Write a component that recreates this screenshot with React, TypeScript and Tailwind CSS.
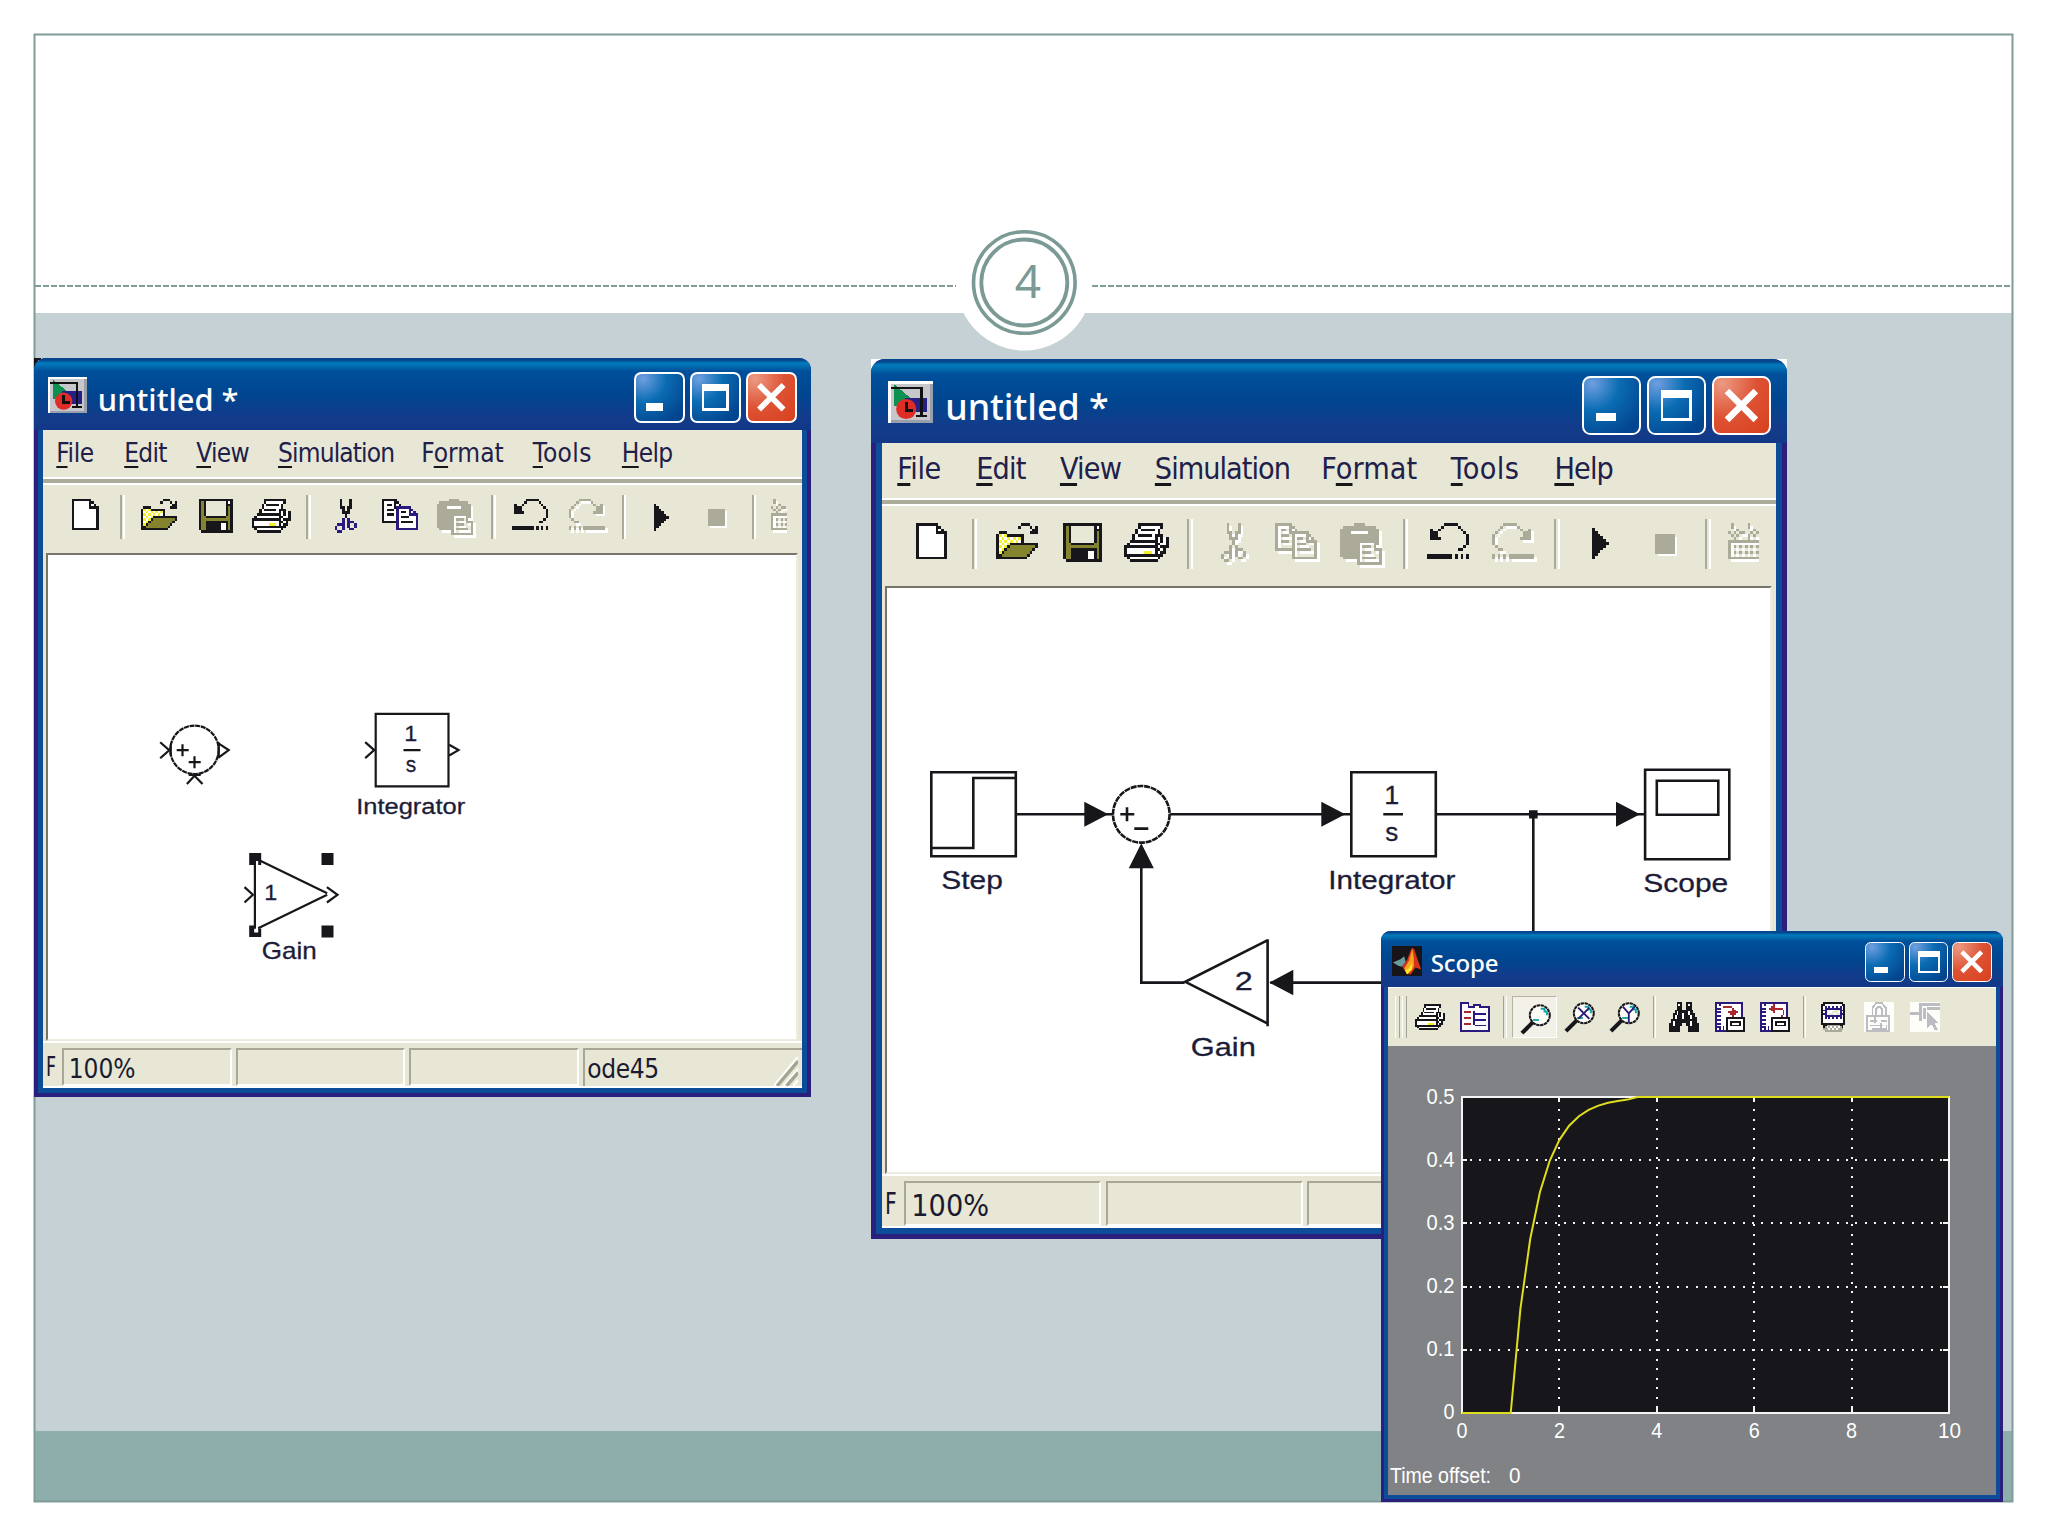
import React from 'react';
import clsx from 'clsx';

const PALETTE: Record<string, string> = {
  k: '#17161b',
  w: '#ffffff',
  y: '#f3ee2b',
  o: '#84842f',
  c: '#e8e8d6',
  b: '#2a1a7e',
  g: '#acab9a',
  r: '#a8282d',
  t: '#12a5a5',
};

const PIXELS: Record<string, string[]> = {
  new: [
    'kkkkkkkk...',
    'kwwwwwwkk..',
    'kwwwwwwkwk.',
    'kwwwwwwkkkk',
    'kwwwwwwwwwk',
    'kwwwwwwwwwk',
    'kwwwwwwwwwk',
    'kwwwwwwwwwk',
    'kwwwwwwwwwk',
    'kwwwwwwwwwk',
    'kwwwwwwwwwk',
    'kwwwwwwwwwk',
    'kkkkkkkkkkk',
  ],
  open: [
    '.........kkk....',
    '........k...k.k.',
    '.............kk.',
    '.kkk........kkk.',
    'kywykkkkkk......',
    'kwywywywyk......',
    'kywywywywk......',
    'kwywykkkkkkkkkk.',
    'kywykoooooooook.',
    'kwykoooooooook..',
    'kykoooooooook...',
    'kkoooooooook....',
    'kkkkkkkkkkk.....',
  ],
  save: [
    'kkkkkkkkkkkkkk',
    'kokcccccccckwk',
    'kokcccccccckkk',
    'kokcccccccckok',
    'kokcccccccckok',
    'kokcccccccckok',
    'kokcccccccckok',
    'kookkkkkkkkook',
    'kooooooooooook',
    'kookkkkkkkkkok',
    'kookkkkkkwwkok',
    'kookkkkkkwwkok',
    'kookkkkkkwwkok',
    '.kkkkkkkkkkkkk',
  ],
  print: [
    '.....kkkkkkkkk..',
    '.....kwwwwwwwk..',
    '....kwkkkkkwk...',
    '....kwwwwwwwk...',
    '...kwkkkkkwkkk..',
    '...kwwwwwwwkwkwk',
    '..kkkkkkkkkkwkwk',
    '.kwwwwwwwwwkkwwk',
    'kkkkkkkkkkkkwkkk',
    'kwwwwwwwwwwkkwk.',
    'kwwwwwwyyywkwkk.',
    'kkkkkkkkkkkkkk..',
    '.kwwwwwwwwwwk...',
    '..kkkkkkkkkk....',
  ],
  cut: [
    '..k...k..',
    '..k...k..',
    '..k...k..',
    '..kk.kk..',
    '...k.k...',
    '...kkk...',
    '....k....',
    '....k....',
    '...b.b...',
    '...b.bbb.',
    '.bbb.b..b',
    'b..b.b..b',
    'b..b..bb.',
    '.bb......',
  ],
  copy: [
    'kkkkkk..........',
    'kwwwwkk.........',
    'kwkkwkwk........',
    'kwwwwkbbbbbb....',
    'kwkkkwbwwwwbb...',
    'kwwwwwbwkkwbwb..',
    'kwkkkwbwwwwbbbb.',
    'kwwwwwbwkkkwwwb.',
    'kwwwwwbwwwwwwwb.',
    'kkkkkkbwkkkkkwb.',
    '......bwwwwwwwb.',
    '......bwwwwwwwb.',
    '......bbbbbbbbb.',
  ],
  paste: [
    '.....kkkk.......',
    '.kkkkkkkkkkkk...',
    'kkkkkkkkkkkkkk..',
    'kkkk......kkkk..',
    'kkkkkkkkkkkkkk..',
    'kkkkkkkkkkkkkk..',
    'kkkkkkkkkkkkkk..',
    'kkkkkkk.....kk..',
    'kkkkkkk.kkk.k...',
    'kkkkkkk.....kkk.',
    'kkkkkkk.kkk...k.',
    'kkkkkkk.......k.',
    '.kkkkkk.kkkkk.k.',
    '......k.......k.',
    '......kkkkkkkkk.',
  ],
  undo: [
    '......kkkkk.....',
    '.....k.....k....',
    '.k..k.......k...',
    '.kkk.........k..',
    '.kkk..........k.',
    '.kkkk.........k.',
    '..............k.',
    '..............k.',
    '.............k..',
    '...........kk...',
    '................',
    'kkkkkkkkk.k.k.k.',
    'kkkkkkkkk.k.k.k.',
  ],
  redo: [
    '....kkkkk......',
    '...k.....k.....',
    '..k.......k..k.',
    '.k.........kkk.',
    'k..........kkk.',
    'k.........kkkk.',
    'k..............',
    'k..............',
    '.k.............',
    '..kk...........',
    '...............',
    'k.k.k.kkkkkkkkk',
    'k.k.k.kkkkkkkkk',
  ],
  play: [
    'k.....',
    'kk....',
    'kkk...',
    'kkkk..',
    'kkkkk.',
    'kkkkkk',
    'kkkkk.',
    'kkkk..',
    'kkk...',
    'kk....',
    'k.....',
  ],
  stop: ['kkkkkkk', 'kkkkkkk', 'kkkkkkk', 'kkkkkkk', 'kkkkkkk', 'kkkkkkk', 'kkkkkkk'],
  build: [
    '.k.....k........',
    '.k.....k...k....',
    '...k.....k......',
    'k.k.kk..k.kk....',
    '.k.k...k.k......',
    '..k....k........',
    'kkkkkkkkkkkkkkkk',
    'k...............',
    'k.k.k.k.k.k.k..k',
    'k...............',
    'k.k.k.k.k.k.k..k',
    'k...............',
    'kkkkkkkkkkkkkkkk',
  ],
  params: [
    'bbbbb...........',
    'bwwwb..bbbb.....',
    'bwwwbbbbwwbbbbbb',
    'bwwwwwwwwwwwwwwb',
    'bwwwwwwwwwwwwwwb',
    'bwrrrrwbwwwwwwwb',
    'bwwwwwwbbbbbbbwb',
    'bwwwwwwbwwwwwwwb',
    'bwrrrrwbwwwwwwwb',
    'bwwwwwwbbbbbbbwb',
    'bwwwwwwbwwwwwwwb',
    'bwrrrrwbwwwwwwwb',
    'bwwwwwwwbbbbbbwb',
    'bwwwwwwwwwwwwwwb',
    'bwwwwwwwwwwwwwwb',
    'bbbbbbbbbbbbbbbb',
  ],
  find: [
    '....kkk..kkk....',
    '....kwk..kwk....',
    '....kkk..kkk....',
    '....kkk..kkk....',
    '...kkkkkkkkkk...',
    '...kwkkkkkwkk...',
    '..kkwkkwkkwkkk..',
    '..kwkkkwkkkwkk..',
    '..kwkkkwkkkwkkk.',
    '.kkkkkkkkkkkkkk.',
    '.kwkkkkkkkkwkkk.',
    'kkwkkkk..kkwkkkk',
    'kkwkkkk..kkwkkkk',
    'kkkkkk....kkkkkk',
    'kkkkkk....kkkkkk',
    'kkkkkk....kkkkkk',
  ],
  saveAxes: [
    'bbbbbbbbbbbbbbb.',
    'bwbwwwwwwwwwwwb.',
    'bwwwrrrrrwwwwwb.',
    'bbbwwwwwwrwwwwb.',
    'bwwwwwwwwrrwwwb.',
    'bbbwwwwrrrrrwwb.',
    'bwwwwwwwrrrwwwb.',
    'bbbwwwwwwrwwwwb.',
    'bwwwwwkkkkkkkkkk',
    'bbbwwwkwwwwwwwwk',
    'bwwwwwkwkkkkkkwk',
    'bbbwwwkwkwwwwkwk',
    'bwwwwwkwkkkkkkwk',
    'bbbwbwkwwwwwwwwk',
    'bwbwbwkwwwwwwwwk',
    'bbbbbbkkkkkkkkkk',
  ],
  restoreAxes: [
    'bbbbbbbbbbbbbbb.',
    'bwbwwwwrwwwwwwb.',
    'bwwwwwrrwwwwwwb.',
    'bbbwwrrrrrrrwwb.',
    'bwwwwwrrwwwwrwb.',
    'bbbwwwwrwwwwrwb.',
    'bwwwwwwwwwwwrwb.',
    'bbbwwwwwwwwrwwb.',
    'bwwwwwkkkkkkkkkk',
    'bbbwwwkwwwwwwwwk',
    'bwwwwwkwkkkkkkwk',
    'bbbwwwkwkwwwwkwk',
    'bwwwwwkwkkkkkkwk',
    'bbbwbwkwwwwwwwwk',
    'bwbwbwkwwwwwwwwk',
    'bbbbbbkkkkkkkkkk',
  ],
  float: [
    '..kkkkkkkkkkk...',
    '.kkwwwwwwwwwkk..',
    '.kwbwbwbwbwbwk..',
    '.kwbbbbbbbbbwk..',
    '.kbbccwwcccbbk..',
    '.kwbcwwcccwbwk..',
    '.kbbwcccwccbbk..',
    '.kwbbbbbbbbbwk..',
    '.kwbwbwbwbwbwk..',
    '.kwwwwwwwwwwwk..',
    '.kwwwwwwwwwwwk..',
    '.kkkkkkkkkkkkk..',
    '..kkgggggggkk...',
    '..kgwgwgwgwgk...',
    '..gggwgwgwggg...',
    '...ggggggggg....',
  ],
};

interface PixelIconProps {
  name: string;
  disabled?: boolean;
}

const PixelIcon: React.FC<PixelIconProps> = ({ name, disabled = false }) => {
  const rows = PIXELS[name];
  const width = rows[0].length;
  const height = rows.length;

  // Disabled glyphs are embossed: a white copy one pixel down and right, then grey
  const draw = (offset: number, color?: string) =>
    rows.flatMap((row, y) =>
      [...row].map((ch, x) =>
        ch === '.' || (disabled && ch === 'w') ? null : (
          <rect key={`${offset}-${x}-${y}`} x={x + offset} y={y + offset} width={1.02} height={1.02} fill={color ?? PALETTE[ch]} />
        )
      )
    );

  return (
    <svg width={width} height={height} viewBox={`0 0 ${width} ${height}`} className="shrink-0 overflow-visible" shapeRendering="crispEdges">
      {disabled ? (
        <>
          {draw(1, '#ffffff')}
          {draw(0, PALETTE.g)}
        </>
      ) : (
        draw(0)
      )}
    </svg>
  );
};

const CaptionButton: React.FC<{ kind: 'min' | 'max' | 'close' }> = ({ kind }) => (
  <div
    className={clsx(
      'size-[21px] rounded-[3px] border border-white',
      kind === 'close'
        ? 'bg-[radial-gradient(circle_at_15%_10%,#ec9a83,#dd5233_50%,#d8401f)]'
        : 'bg-[radial-gradient(circle_at_15%_10%,#6f9fe0,#0a6cb3_40%,#03458f_85%)]'
    )}
  >
    <svg viewBox="1 1 19 19" className="block size-full" shapeRendering="crispEdges">
      {kind === 'min' && <rect x="5" y="13" width="7" height="3" fill="#fff" />}
      {kind === 'max' && <path d="M5 5h11v11h-11zM6 8v7h9v-7z" fill="#fff" fillRule="evenodd" />}
      {kind === 'close' && <path d="M5.5 5.5l10 10M15.5 5.5l-10 10" stroke="#fff" strokeWidth="2.3" shapeRendering="auto" />}
    </svg>
  </div>
);

const SimulinkLogo = () => (
  <svg width="16" height="16" viewBox="0 0 16 16" shapeRendering="crispEdges">
    <path d="M0 0h16v15h-16z" fill="#c7c6cb" />
    <path d="M0 0h16v1h-15v14h-1z" fill="#fff" />
    <path d="M15 1h1v14h-15v-1h14z" fill="#98a0ad" />
    <path d="M2 1v8h4l2-3z" fill="#0d9150" />
    <path d="M6 6h8v5h-8z" fill="#261f85" />
    <circle cx="6.500" cy="10" r="3.600" fill="#e02c27" shapeRendering="auto" />
    <path d="M1 2.500h11v10.500M10 12.500h4M6.500 7.500v3h2.500" fill="none" stroke="#111" strokeWidth="1" />
  </svg>
);

const MatlabLogo = () => (
  <svg width="16" height="16" viewBox="0 0 16 16">
    <rect width="16" height="16" fill="#17151a" />
    <path d="M0.500 8.800l4-1.800 2-1.500 0.800 3-2 2.500-2-0.500z" fill="#6b9c9d" />
    <path d="M5.500 11l2.500-3.500 2.500-6.500 1.200 0.500 2 6 1.800 5-3-1-2.500 3.500-2 0z" fill="#d9331e" />
    <path d="M6.500 12l2.500-4 1.800-6.500 0.800 5 0 4.500-3.600 4z" fill="#f8a51e" />
    <path d="M7 13l2-1 1.500-3 0.300 3.500-2.800 2.500z" fill="#f7ea2a" />
  </svg>
);

interface TitleBarProps {
  title: string;
  logo: React.ReactNode;
  titleClass: string;
}

const TitleBar: React.FC<TitleBarProps> = ({ title, logo, titleClass }) => (
  <div className="flex h-[30px] shrink-0 items-start bg-[linear-gradient(#06468f_0,#06468f_3%,#027bbd_7%,#0272b5_10%,#00509b_18%,#00458f_50%,#123c8b_80%,#123887)] pr-[5.700px] pl-[6px]">
    <div className="mt-[8px]">{logo}</div>
    <span className={clsx("ml-[4.500px] font-['Noto_Sans',sans-serif] leading-[18px] font-medium whitespace-pre text-white", titleClass)}>
      {title}
    </span>
    <div className="mt-[6px] ml-auto flex gap-[2.200px]">
      <CaptionButton kind="min" />
      <CaptionButton kind="max" />
      <CaptionButton kind="close" />
    </div>
  </div>
);

const MENU = [
  { pre: '', key: 'F', post: 'ile', cls: 'w-[28.200px] tracking-[-0.150px]' },
  { pre: '', key: 'E', post: 'dit', cls: 'w-[29.900px] tracking-[-0.300px]' },
  { pre: '', key: 'V', post: 'iew', cls: 'w-[33.900px] tracking-[-0.300px]' },
  { pre: '', key: 'S', post: 'imulation', cls: 'w-[59.400px] tracking-[-0.350px]' },
  { pre: 'F', key: 'o', post: 'rmat', cls: 'w-[46.300px] tracking-[0.020px]' },
  { pre: '', key: 'T', post: 'ools', cls: 'w-[37px] tracking-[0.150px]' },
  { pre: '', key: 'H', post: 'elp', cls: 'w-[40px] tracking-[-0.300px]' },
];

const MenuBar = () => (
  <div className="flex h-[19.500px] shrink-0 pt-[3px] pl-[5.600px] font-['DejaVu_Sans_Condensed','DejaVu_Sans',sans-serif] text-[10.800px] leading-[13px] text-[#20204a] [font-stretch:condensed]">
    {MENU.map((m) => (
      <span key={m.post} className={m.cls}>
        {m.pre}
        <span className="underline decoration-[#17161b] decoration-[1px] underline-offset-[1.500px]">{m.key}</span>
        {m.post}
      </span>
    ))}
  </div>
);

const TOOLS: { name: string; off?: boolean }[][] = [
  [{ name: 'new' }],
  [{ name: 'open' }, { name: 'save' }, { name: 'print' }],
  [{ name: 'cut' }, { name: 'copy' }, { name: 'paste', off: true }],
  [{ name: 'undo' }, { name: 'redo', off: true }],
  [{ name: 'play' }, { name: 'stop', off: true }],
  [{ name: 'build', off: true }],
];

const Separator = () => <div className="mx-[3px] h-[18px] w-[2px] shrink-0 border-r border-l border-r-white border-l-[#acab9a]" />;

interface SimulinkWindowProps {
  size: string;
  clipboardOff?: boolean;
  solver?: string;
  children: React.ReactNode;
}

const SimulinkWindow: React.FC<SimulinkWindowProps> = ({ size, clipboardOff = false, solver, children }) => (
  <div className={clsx('flex flex-col overflow-hidden rounded-t-[5px] bg-[#2a1f7d]', size)}>
    <TitleBar title="untitled *" logo={<SimulinkLogo />} titleClass="mt-[8.200px] text-[12.800px]" />
    <div className="flex min-h-0 grow flex-col border-r-[2px] border-b-[2px] border-l-[2px] border-[#2a1f7d] bg-[#0d4c98] px-[2px] pb-[2px]">
      <div className="flex min-h-0 grow flex-col bg-[#e8e7d5]">
        <MenuBar />
        <div className="h-[3px] shrink-0 border-y border-white bg-[#acab9a]" />
        <div className="mr-[6px] flex h-[28.500px] shrink-0 items-center overflow-hidden pb-[1.500px] pl-[6.200px]">
          {TOOLS.map((group, i) => (
            <React.Fragment key={i}>
              {i > 0 && <Separator />}
              {group.map((tool) => (
                <div
                  key={tool.name}
                  className={clsx(
                    'flex h-[15px] w-[23px] shrink-0',
                    tool.name === 'play' || tool.name === 'stop' ? 'items-center' : 'items-start',
                    tool.name === 'build' ? 'items-end justify-start pl-[3px]' : 'justify-center'
                  )}
                >
                  <PixelIcon name={tool.name} disabled={tool.off || (clipboardOff && ['cut', 'copy'].includes(tool.name))} />
                </div>
              ))}
            </React.Fragment>
          ))}
        </div>
        <div className="mr-[1.500px] ml-[1.300px] min-h-0 grow overflow-hidden border border-[#77756a] border-r-[#eeece0] border-b-[#eeece0] bg-white">{children}</div>
        <div className="flex h-[19.500px] shrink-0 gap-[1.600px] border-t border-b border-white pt-[2px] font-['DejaVu_Sans_Condensed','DejaVu_Sans',sans-serif] text-[10.800px] leading-[16.400px] text-[#1a1a30] [font-stretch:condensed]">
          <span className="w-[6.500px] shrink-0 pl-[1.300px]">
            <span className="inline-block origin-left scale-x-75">F</span>
          </span>
          <StatusPanel>100%</StatusPanel>
          <StatusPanel />
          <StatusPanel />
          <div className="flex grow justify-between border-t border-l border-[#a8a795] pr-[1.500px] pl-[1px] tracking-[-0.150px]">
            {solver}
            <svg width="10" height="12" viewBox="0 0 10 12" className="self-end">
              <path d="M0 12L10 0M4 12L10 5M8 12L10 9.500" stroke="#fff" />
              <path d="M1.300 12L10 1.700M5.200 12L10 6.500" stroke="#a5a492" strokeWidth="1.400" />
            </svg>
          </div>
        </div>
      </div>
    </div>
  </div>
);

const StatusPanel: React.FC<{ children?: React.ReactNode }> = ({ children }) => (
  <div className="w-[70.400px] shrink-0 border border-[#a8a795] border-r-white border-b-white pl-[1.800px]">{children}</div>
);

interface LabelProps {
  x: number;
  y: number;
  w: number;
  size: number;
  children: string;
}

const Label: React.FC<LabelProps> = ({ x, y, w, size, children }) => (
  <text x={x} y={y} fontSize={size} textLength={w} lengthAdjust="spacingAndGlyphs" fill="#1d1c38" stroke="#1d1c38" strokeWidth="0.300">
    {children}
  </text>
);

const OpenDiagram = () => (
  <svg width="310" height="200" viewBox="47.800 555.200 747.100 482" className="block font-['Liberation_Sans',Arial,sans-serif]">
    <g fill="none" stroke="#17161b" strokeWidth="2.200">
      <circle cx="194.300" cy="750" r="24.200" strokeDasharray="5 0.700" />
      <path d="M160 742.500l9 8l-9 8M170.500 745v10.500M218.500 742.500v16M219 744l9.500 6.300l-9.500 7M186.700 784.300l7.600-8.300l8 8.300M188.500 775h12" />
      <path d="M176.500 750.300h12M182.300 744.500v12M188.500 762.300h12M194.300 756.500v12" />
      <path d="M375.500 714h72.800v72.500h-72.800z" />
      <path d="M365 742.300l9 8l-9 8M449 745l9.300 5.300l-9.300 5.400M403.300 750.300h17" />
      <path d="M254.700 859v70M258 860l69 33.500M258 928.500l69-33.500" />
      <path d="M244.300 887.300l8.400 7.700l-8.400 7.700M326.700 887.300l10.600 7.700l-10.600 7.700" />
    </g>
    <g fill="#17161b">
      <path d="M249 853.300h12v12h-3v-4h-4v4h-5zM321.300 853.300h12v12h-12zM249 925.700h5v7h4v-4h3v8.600h-12zM321.300 925.700h12v12h-12z" />
    </g>
    <Label x={404} y={741} w={13} size={22}>1</Label>
    <Label x={405.500} y={772.700} w={10.500} size={22}>s</Label>
    <Label x={356} y={814.500} w={109} size={22.500}>Integrator</Label>
    <Label x={264} y={900.700} w={13} size={22}>1</Label>
    <Label x={261.500} y={959.500} w={55} size={23}>Gain</Label>
  </svg>
);

const FeedbackDiagram = () => (
  <svg width="316" height="205" viewBox="886.700 587.700 884.800 574" className="block font-['Liberation_Sans',Arial,sans-serif]">
    <g fill="none" stroke="#17161b" strokeWidth="2.600">
      <path d="M931 772h84.500v84h-84.500zM931 847.700h42v-70h42.500" />
      <path d="M1015.500 814h97M1170 814h181M1435.500 814h209M1533 814v200M1500 982.300h-230M1184.300 982.300h-43.300v-120" />
      <circle cx="1141" cy="814" r="28.300" strokeDasharray="6 0.800" />
      <path d="M1120 814h14M1126.700 807v14M1134 828.300h14" />
      <path d="M1351 772h84.500v84h-84.500zM1383 814h19.700" />
      <path d="M1644.800 769.500h84.200v89.500h-84.200zM1656.500 780.500h61.500v34h-61.500z" />
      <path d="M1267.300 939v87M1267 940l-82 41.500l82 41.500" />
    </g>
    <g fill="#17161b">
      <path d="M1084 801.500l24 12.500l-24 12.500zM1321 801.500l24 12.500l-24 12.500zM1615.700 801.500l24 12.500l-24 12.500z" />
      <path d="M1128.500 868l12.500-25l12.500 25zM1293 969.500l-24 12.800l24 12.700zM1528.700 810h8.600v8.300h-8.600z" />
    </g>
    <Label x={941} y={888.700} w={61.500} size={26}>Step</Label>
    <Label x={1384} y={803.300} w={15} size={26}>1</Label>
    <Label x={1385} y={840.500} w={13} size={26}>s</Label>
    <Label x={1328} y={888.700} w={127} size={26}>Integrator</Label>
    <Label x={1643} y={891.500} w={85} size={26}>Scope</Label>
    <Label x={1234.500} y={989.500} w={18} size={26}>2</Label>
    <Label x={1190.500} y={1056} w={65} size={26}>Gain</Label>
  </svg>
);

const ZoomIcon: React.FC<{ axis?: 'xy' | 'y' }> = ({ axis }) => (
  <svg width="16" height="16" viewBox="0 0 16 16" className="overflow-visible">
    <path d="M0.500 15.500l6-6" stroke="#17161b" strokeWidth="2.200" />
    <circle cx="10" cy="6" r="5.300" fill="#fdfdf5" stroke="#17161b" strokeWidth="1.100" strokeDasharray="1.800 0.300" />
    <path d="M10.500 2.500h2v1.500h1.300v2" fill="none" stroke={PALETTE.t} strokeWidth="1" />
    <path d="M6.500 8.500h3" stroke={PALETTE.t} strokeWidth="1" />
    {axis === 'xy' && <path d="M7 3l6 6M13 3l-6 6" stroke={PALETTE.b} strokeWidth="1" />}
    {axis === 'y' && <path d="M6.800 2.500l3.200 3.500l3.200-3.500M10 6v5" fill="none" stroke={PALETTE.b} strokeWidth="1" />}
  </svg>
);

const LockIcon = () => (
  <svg width="16" height="16" viewBox="0 0 16 16" shapeRendering="crispEdges">
    <rect width="16" height="16" fill="#fdfdfa" />
    <path d="M4.500 7V3l2-2.500h3l2 2.500V7M6.500 7V3.500l1-1h1l1 1V7M1.500 7.500h12v8h-12zM3 10h4M9 10h3M3 12.500h7M12 12.500v2M4 14.500h8M6 8v3M9 11v3" fill="none" stroke="#bdbcc2" />
  </svg>
);

const SignalIcon = () => (
  <svg width="16" height="16" viewBox="0 0 16 16" shapeRendering="crispEdges">
    <rect width="16" height="16" fill="#fdfdfa" />
    <path d="M0 6h5M5.500 10V1.500H16M9 3.500h7M7.500 3v6" fill="none" stroke="#bdbcc2" strokeWidth="1.600" />
    <path d="M9 5l6 6h-2l2 4h-2l-1.500-3l-2.500 2z" fill="#bdbcc2" />
  </svg>
);

const ScopeButton: React.FC<{ pressed?: boolean; children: React.ReactNode }> = ({ pressed = false, children }) => (
  <div
    className={clsx(
      'flex h-[22.500px] w-[24px] shrink-0 items-center justify-center',
      pressed && 'border border-[#b5b3a4] border-r-white border-b-white bg-[#f3f0e8] pt-[2px] pl-[2px]'
    )}
  >
    {children}
  </div>
);

const ScopeSeparator = () => <div className="mx-[2.900px] h-[22px] w-[2px] shrink-0 border-r border-l border-r-white border-l-[#a5a492]" />;

// Axes box of the plot, in the units of the chart's viewBox
const PLOT = { left: 1462, top: 1097, width: 487, height: 316 };
const toX = (t: number) => PLOT.left + (t / 10) * PLOT.width;
const toY = (v: number) => PLOT.top + PLOT.height * (1 - v / 0.5);

const response = Array.from({ length: 46 }, (_, i) => {
  const t = 1 + i * 0.2;
  const v = t > 3.5 ? 0.5 : 0.5 * (1 - Math.exp(-2 * (t - 1)));
  return `${toX(t).toFixed(1)},${toY(v).toFixed(1)}`;
}).join(' ');

const ScopeChart = () => (
  <svg width="324" height="238" viewBox="1388 1046 609.100 447.400" className="block font-['Liberation_Sans',Arial,sans-serif]">
    <rect x={PLOT.left} y={PLOT.top} width={PLOT.width} height={PLOT.height} fill="#17161b" />
    <g stroke="#f3f3f5" strokeWidth="2" shapeRendering="crispEdges">
      {[0.1, 0.2, 0.3, 0.4].map((v) => (
        <g key={v}>
          <path d={`M${PLOT.left + 8} ${toY(v)}h${PLOT.width - 12}`} strokeDasharray="2 7.400" />
          <path d={`M${PLOT.left} ${toY(v)}h5M${PLOT.left + PLOT.width - 6} ${toY(v)}h6`} />
        </g>
      ))}
      {[2, 4, 6, 8].map((t) => (
        <g key={t}>
          <path d={`M${toX(t)} ${PLOT.top + 12}v${PLOT.height - 20}`} strokeDasharray="2 7.600" />
          <path d={`M${toX(t)} ${PLOT.top}v5M${toX(t)} ${PLOT.top + PLOT.height}v-7`} />
        </g>
      ))}
      <rect x={PLOT.left} y={PLOT.top} width={PLOT.width} height={PLOT.height} fill="none" />
    </g>
    <polyline points={`${toX(0)},${toY(0)} ${response}`} fill="none" stroke="#dede1e" strokeWidth="2" />
    <g fill="#ffffff" fontSize="22.500">
      {['0.5', '0.4', '0.3', '0.2', '0.1'].map((v) => (
        <text key={v} x="1426.500" y={toY(Number(v)) + 6.500} textLength="28" lengthAdjust="spacingAndGlyphs">{v}</text>
      ))}
      <text x="1443.500" y="1419" textLength="11" lengthAdjust="spacingAndGlyphs">0</text>
      {[0, 2, 4, 6, 8].map((t) => (
        <text key={t} x={toX(t) - 5.500} y="1437.700" textLength="11" lengthAdjust="spacingAndGlyphs">{t}</text>
      ))}
      <text x="1938" y="1437.700" textLength="23" lengthAdjust="spacingAndGlyphs">10</text>
      <text x="1390" y="1482.700" textLength="101" lengthAdjust="spacingAndGlyphs">Time offset:</text>
      <text x="1509" y="1482.700" textLength="11.500" lengthAdjust="spacingAndGlyphs">0</text>
    </g>
  </svg>
);

const ScopeWindow = () => (
  <div className="flex h-[303.800px] w-[330.600px] flex-col overflow-hidden rounded-t-[5px] bg-[#2a1f7d]">
    <TitleBar title="Scope" logo={<MatlabLogo />} titleClass="mt-[8px] -ml-[-4px] text-[12.800px] tracking-[-0.100px]" />
    <div className="flex min-h-0 grow flex-col border-r-[2px] border-b-[2px] border-l-[2px] border-[#2a1f7d] bg-[#0d4c98] px-[2px] pb-[2px]">
      <div className="flex h-[31px] shrink-0 items-center border-t border-white bg-[#e8e7d5] pl-[4px]">
        <div className="flex h-[22.500px] w-[6.300px] shrink-0 gap-[1px]">
          <div className="w-[2.500px] border-r border-l border-r-[#a5a492] border-l-white" />
          <div className="w-[2.500px] border-r border-l border-r-[#a5a492] border-l-white" />
        </div>
        <ScopeButton><PixelIcon name="print" /></ScopeButton>
        <ScopeButton><PixelIcon name="params" /></ScopeButton>
        <ScopeSeparator />
        <ScopeButton pressed><ZoomIcon /></ScopeButton>
        <ScopeButton><ZoomIcon axis="xy" /></ScopeButton>
        <ScopeButton><ZoomIcon axis="y" /></ScopeButton>
        <ScopeSeparator />
        <ScopeButton><PixelIcon name="find" /></ScopeButton>
        <ScopeButton><PixelIcon name="saveAxes" /></ScopeButton>
        <ScopeButton><PixelIcon name="restoreAxes" /></ScopeButton>
        <ScopeSeparator />
        <ScopeButton><PixelIcon name="float" /></ScopeButton>
        <ScopeButton><LockIcon /></ScopeButton>
        <ScopeButton><SignalIcon /></ScopeButton>
      </div>
      <div className="min-h-0 grow overflow-hidden bg-[#808285]">
        <ScopeChart />
      </div>
    </div>
  </div>
);

const App = () => {
  return (
    <div className="relative h-[1536px] w-[2048px] overflow-hidden bg-white p-[34px] pr-[35px]">
      <div className="flex h-[1468px] flex-col">
        <div className="h-[279px] shrink-0" />
        <div className="grow bg-[#c5d1d5]" />
        <div className="h-[71px] shrink-0 bg-[#8eaeac]" />
      </div>

      {/* Slide frame, dashed rule and page number */}
      <svg className="absolute inset-0" width="2048" height="1536" viewBox="0 0 2048 1536">
        <rect x="34.500" y="34.500" width="1978" height="1467" fill="none" stroke="#7f9c99" strokeWidth="2" />
        <path d="M35 286H956M1092 286H2012" stroke="#7f9c99" strokeWidth="2" strokeDasharray="6 2" />
        <circle cx="1024.300" cy="282.500" r="68" fill="#ffffff" />
        <circle cx="1024.300" cy="282.500" r="50.800" fill="none" stroke="#7b9995" strokeWidth="3.600" />
        <circle cx="1024.300" cy="282.500" r="43" fill="none" stroke="#7b9995" strokeWidth="3.800" />
        <text x="1028" y="297.500" textAnchor="middle" fontSize="46" fill="#7b9995" className="font-['Noto_Sans',sans-serif]">
          4
        </text>
        <path d="M34 358h7v2h-3v4h-2v5h-2z" fill="#17161b" />
      </svg>

      <div className="absolute top-[358px] left-[34px]">
        <div className="[zoom:2.41]">
          <SimulinkWindow size="h-[306.600px] w-[322.200px]" solver="ode45">
            <OpenDiagram />
          </SimulinkWindow>
        </div>
      </div>

      <div className="absolute top-[359px] left-[871px] bg-white">
        <div className="[zoom:2.8]">
          <SimulinkWindow size="h-[314.200px] w-[327px]" clipboardOff>
            <FeedbackDiagram />
          </SimulinkWindow>
        </div>
      </div>

      <div className="absolute top-[931px] left-[1381px]">
        <div className="[zoom:1.88]">
          <ScopeWindow />
        </div>
      </div>
    </div>
  );
};

export default App;
